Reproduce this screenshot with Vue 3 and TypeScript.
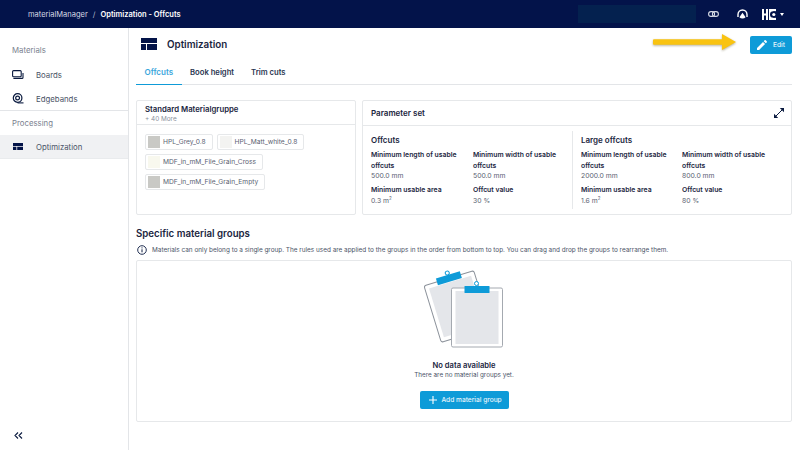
<script setup lang="ts">
const sets = [
  {
    title: "Offcuts",
    length: "500.0 mm",
    width: "500.0 mm",
    area: "0.3 m",
    value: "30 %"
  },
  {
    title: "Large offcuts",
    length: "2000.0 mm",
    width: "800.0 mm",
    area: "1.6 m",
    value: "80 %"
  }
];

const chipRows = [
  [
    { name: "HPL_Grey_0.8", color: "#c9c9c5" },
    { name: "HPL_Matt_white_0.8", color: "#f3f3f1" }
  ],
  [{ name: "MDF_in_mM_File_Grain_Cross", color: "#f8f8ee" }],
  [{ name: "MDF_in_mM_File_Grain_Empty", color: "#c9c9c5" }]
];
</script>

<template>
  <div class="app">
    <header class="topbar">
      <div class="crumbs">
        <span class="crumb-app">materialManager</span>
        <span class="crumb-sep">/</span>
        <span class="crumb-page">Optimization - Offcuts</span>
      </div>
      <div class="search-slot"></div>
      <svg class="top-icon link-icon" viewBox="0 0 11 6" width="11" height="6">
        <rect x="0.6" y="0.6" width="6" height="4.800" rx="2.400" />
        <rect x="4.400" y="0.6" width="6" height="4.800" rx="2.400" />
      </svg>
      <svg class="top-icon help-icon" viewBox="0 0 11 10" width="11" height="10">
        <path class="thick" d="M1 8V5.500a4.500 4.500 0 0 1 9 0V8" />
        <path class="solid" d="M2.400 8.300 5.500 3.800l3.100 4.500a4.400 4.400 0 0 1-6.200 0z" />
      </svg>
      <svg class="logo" viewBox="0 0 14 11" width="14" height="11">
        <path fill="#fff" d="M0 0h2v4.500h2V0h2v11H4V6.500H2V11H0z" />
        <rect x="7" y="0" width="7" height="11" fill="#fff" />
        <circle cx="11.300" cy="5.500" r="3.300" fill="#03134a" />
        <rect x="11.300" y="2.200" width="2.700" height="6.600" fill="#03134a" />
        <circle fill="#fff" cx="11.800" cy="5.500" r="1.600" />
      </svg>
      <span class="caret"></span>
    </header>

    <div class="body">
      <aside class="sidebar">
        <div class="nav">
          <div class="nav-title first">Materials</div>
          <div class="nav-item">
            <svg class="nav-icon" viewBox="0 0 12 10" width="12" height="10">
              <rect x="0.6" y="0.6" width="8.600" height="6.200" rx="1" fill="none" stroke="#0a1a3f" stroke-width="1.100" />
              <path d="M11 3v4.400a1 1 0 0 1-1 1H1.400" fill="none" stroke="#0a1a3f" stroke-width="1.100" />
            </svg>
            <span>Boards</span>
          </div>
          <div class="nav-item">
            <svg class="nav-icon" viewBox="0 0 12 12" width="12" height="12">
              <circle cx="5.600" cy="5" r="4.300" fill="none" stroke="#0a1a3f" stroke-width="1.200" />
              <circle cx="5.600" cy="5" r="1.900" fill="none" stroke="#0a1a3f" stroke-width="1.200" />
              <path d="M5.600 9.900H11.500" stroke="#0a1a3f" stroke-width="1.100" />
            </svg>
            <span>Edgebands</span>
          </div>
          <div class="nav-rule"></div>
          <div class="nav-title">Processing</div>
          <div class="nav-item active">
            <svg class="nav-icon" viewBox="0 0 10 7" width="10" height="7">
              <path fill="#031348" d="M0 0h10v3H0zM0 3.800h3.400V7H0zM4.200 3.800H10V7H4.200z" />
            </svg>
            <span>Optimization</span>
          </div>
        </div>
        <svg class="collapse" viewBox="0 0 9 7" width="9" height="7">
          <path d="M4 .5 1 3.500l3 3M8 .5l-3 3 3 3" />
        </svg>
      </aside>

      <main class="content">
        <div class="page-head">
          <svg class="page-icon" viewBox="0 0 16 12" width="16" height="12">
            <path fill="#031348" d="M0 0h16v5H0zM0 6h5v6H0zM6 6h10v6H6z" />
          </svg>
          <h1>Optimization</h1>
          <button class="btn edit">
            <svg viewBox="0 0 10 10" width="10" height="10">
              <path fill="#fff" d="M0 10V7.900L6 1.900 8.100 4 2.100 10zM6.700 1.200 7.600.3a.8.8 0 0 1 1.100 0l1 1a.8.8 0 0 1 0 1.100l-.9.9z" />
            </svg>
            Edit
          </button>
        </div>

        <nav class="tabs">
          <span class="tab current">Offcuts</span>
          <span class="tab">Book height</span>
          <span class="tab">Trim cuts</span>
        </nav>

        <div class="cards">
          <section class="card group">
            <div class="group-head">
              <div class="group-title">Standard Materialgruppe</div>
              <div class="group-more">+ 40 More</div>
            </div>
            <div class="chips">
              <div v-for="(row, i) in chipRows" :key="i" class="chip-row">
                <div v-for="chip in row" :key="chip.name" class="chip">
                  <i class="swatch" :style="{ background: chip.color }"></i>
                  {{ chip.name }}
                </div>
              </div>
            </div>
          </section>

          <section class="card params">
            <div class="params-head">
              <span>Parameter set</span>
              <svg viewBox="0 0 10 10" width="10" height="10">
                <path d="M1.500 8.500 8.500 1.500" stroke="#0a1a3f" stroke-width="1" />
                <path fill="#0a1a3f" d="M5.800 0H10v4.200zM0 5.800V10h4.200z" />
              </svg>
            </div>
            <div class="params-body">
              <div v-for="set in sets" :key="set.title" class="param-col">
                <h3>{{ set.title }}</h3>
                <div class="param-grid">
                  <div>
                    <b>Minimum length of usable offcuts</b>
                    <span>{{ set.length }}</span>
                  </div>
                  <div>
                    <b>Minimum width of usable offcuts</b>
                    <span>{{ set.width }}</span>
                  </div>
                  <div>
                    <b>Minimum usable area</b>
                    <span>{{ set.area }}<sup>2</sup></span>
                  </div>
                  <div>
                    <b>Offcut value</b>
                    <span>{{ set.value }}</span>
                  </div>
                </div>
              </div>
            </div>
          </section>
        </div>

        <h2>Specific material groups</h2>
        <div class="hint">
          <svg viewBox="0 0 10 10" width="10" height="10">
            <circle cx="5" cy="5" r="4.300" fill="none" stroke="#0a1a3f" stroke-width="0.900" />
            <path d="M5 4.300v3M5 2.400v1" stroke="#0a1a3f" stroke-width="1" />
          </svg>
          <span>Materials can only belong to a single group. The rules used are applied to the groups in the order from bottom to top. You can drag and drop the groups to rearrange them.</span>
        </div>

        <div class="card empty">
          <svg class="clipboards" viewBox="0 0 84 86" width="84" height="86">
            <g transform="rotate(-17 35.500 38.500)">
              <rect x="9.500" y="9" width="52" height="59" rx="2" fill="#fff" stroke="#8c929b" stroke-width="1" />
              <rect x="13.500" y="13" width="44" height="51" fill="#e4e6ea" />
              <rect x="23" y="5.500" width="25" height="7" fill="#0e9bd8" />
              <circle cx="35.500" cy="3.500" r="2" fill="#fff" stroke="#0e9bd8" stroke-width="1" />
            </g>
            <rect x="29.500" y="20" width="51" height="59" rx="1.500" fill="#fff" stroke="#a4a9b0" stroke-width="1" />
            <rect x="33.500" y="23" width="43" height="53" fill="#e4e6ea" />
            <rect x="42.500" y="18" width="25" height="7" rx="0.500" fill="#0e9bd8" />
            <circle cx="54.500" cy="15.500" r="2" fill="#fff" stroke="#0e9bd8" stroke-width="1" />
          </svg>
          <strong>No data available</strong>
          <p>There are no material groups yet.</p>
          <button class="btn add">
            <svg viewBox="0 0 8 8" width="8" height="8">
              <path d="M4 0v8M0 4h8" stroke="#fff" stroke-width="1.100" />
            </svg>
            Add material group
          </button>
        </div>
      </main>
    </div>

    <svg class="arrow" viewBox="0 0 84 16" width="84" height="16">
      <path d="M1 5.200h68V0L83 8 69 16v-5.200H1a1 1 0 0 1-1-1V6.200a1 1 0 0 1 1-1z" fill="#f9c311" />
    </svg>
  </div>
</template>

<style>
html,
body {
  margin: 0;
  background: #fff;
}
</style>

<style scoped>
.app {
  position: relative;
  width: 800px;
  height: 450px;
  overflow: hidden;
  display: flex;
  flex-direction: column;
  font-family: Inter, "Liberation Sans", sans-serif;
  color: #1a2540;
}
.topbar {
  height: 28px;
  flex: none;
  display: flex;
  align-items: center;
  background: #03134a;
  color: #fff;
  padding: 0 16px 0 28px;
  font-size: 7.500px;
}
.crumb-app {
  color: #d5d9e4;
}
.crumb-sep {
  margin: 0 5px;
  color: #b6bccd;
}
.crumb-page {
  font-weight: 600;
}
.search-slot {
  width: 118px;
  height: 18px;
  margin-left: auto;
  background: #04214f;
}
.top-icon {
  fill: none;
  stroke: #d8dce6;
  stroke-width: 1.100;
}
.top-icon .thick {
  stroke: #fff;
  stroke-width: 1.400;
}
.top-icon .solid {
  fill: #fff;
  stroke: none;
}
.link-icon {
  margin-left: 12px;
}
.help-icon {
  margin-left: 18px;
}
.logo {
  margin-left: 14px;
}
.caret {
  margin-left: 4px;
  border: 2.500px solid transparent;
  border-top: 3px solid #fff;
  border-bottom: 0;
}
.body {
  flex: 1;
  display: flex;
  min-height: 0;
}
.sidebar {
  width: 128px;
  flex: none;
  display: flex;
  flex-direction: column;
  justify-content: space-between;
  border-right: 1px solid #e3e5e8;
  font-size: 7.800px;
  color: #4b5468;
}
.nav {
  padding-top: 10px;
}
.nav-title {
  height: 24px;
  line-height: 24px;
  padding-left: 12px;
  color: #7b8290;
}
.nav-title.first {
  height: 25px;
}
.nav-item {
  height: 24px;
  display: flex;
  align-items: center;
  padding-left: 12px;
}
.nav-icon {
  margin-right: 12px;
  width: 12px;
}
.nav-rule {
  height: 1px;
  margin-top: -1px;
  background: #e3e5e8;
}
.nav-item.active {
  background: #f0f1f3;
  height: 23px;
  border-bottom: 1px solid #e9ebed;
}
.collapse {
  margin: 0 0 11px 14px;
  fill: none;
  stroke: #0a1a3f;
  stroke-width: 1.100;
}
.content {
  flex: 1;
  min-width: 0;
  padding: 0 8px 0 7px;
  display: flex;
  flex-direction: column;
}
.page-head {
  height: 32px;
  display: flex;
  align-items: center;
  padding-left: 5px;
}
.page-icon {
  margin-right: 10px;
}
h1 {
  margin: 0;
  font-size: 9.800px;
  font-weight: 600;
  color: #1a2540;
}
.btn {
  display: flex;
  align-items: center;
  border: 0;
  border-radius: 2px;
  background: #0e9bd8;
  color: #e8f6fc;
  font: 500 6.600px Inter, "Liberation Sans", sans-serif;
}
.edit {
  margin-left: auto;
  margin-top: 1px;
  width: 42px;
  height: 18px;
  padding: 0 0 0 7px;
  gap: 6px;
}
.tabs {
  height: 20px;
  margin-top: 4px;
  display: flex;
  border-bottom: 1px solid #e3e5e8;
  font-size: 7.650px;
  font-weight: 600;
  color: #2a3550;
}
.tab {
  padding: 0 8.500px;
  line-height: 17px;
}
.tab.current {
  color: #3aa6dc;
  font-size: 8px;
  border-bottom: 1px solid #0e9bd8;
  height: 20px;
}
.cards {
  margin-top: 15px;
  height: 115px;
  display: flex;
  gap: 6px;
  flex: none;
}
.card {
  box-sizing: border-box;
  border: 1px solid #e6e8ea;
  border-radius: 2px;
  background: #fff;
}
.group {
  width: 220px;
  flex: none;
}
.group-head {
  height: 24px;
  box-sizing: border-box;
  padding: 2px 8px 0;
  border-bottom: 1px solid #e6e8ea;
}
.group-title {
  font-size: 7.750px;
  font-weight: 600;
  line-height: 12px;
}
.group-more {
  font-size: 6.400px;
  line-height: 9px;
  color: #8a909c;
}
.chips {
  padding: 9px 8px 0;
  display: flex;
  flex-direction: column;
  gap: 4px;
}
.chip-row {
  display: flex;
  gap: 4px;
}
.chip {
  height: 16px;
  box-sizing: border-box;
  display: flex;
  align-items: center;
  gap: 3px;
  padding: 0 6px 0 2px;
  border: 1px solid #e6e8ea;
  border-radius: 2px;
  font-size: 6.650px;
  color: #5a6272;
}
.swatch {
  width: 12px;
  height: 12px;
}
.params {
  flex: 1;
  min-width: 0;
}
.params-head {
  height: 25px;
  box-sizing: border-box;
  display: flex;
  align-items: center;
  justify-content: space-between;
  padding: 0 7px 0 8px;
  border-bottom: 1px solid #e6e8ea;
  font-size: 8px;
  font-weight: 600;
}
.params-body {
  display: flex;
  padding-top: 5px;
}
.param-col {
  width: 209px;
  box-sizing: border-box;
  padding-left: 8px;
  height: 78px;
}
.param-col + .param-col {
  width: auto;
  flex: 1;
  border-left: 1px solid #e6e8ea;
  padding-left: 8px;
}
h3 {
  margin: 1px 0 0;
  font-size: 8px;
  line-height: 16px;
  font-weight: 600;
}
.param-grid {
  display: grid;
  grid-template-columns: 102px 100px;
  row-gap: 3.500px;
  margin-top: 2px;
}
.param-col + .param-col .param-grid {
  grid-template-columns: 101px 100px;
}
.param-grid b {
  display: block;
  font-size: 6.850px;
  font-weight: 600;
  line-height: 10.500px;
  max-width: 92px;
}
.param-grid span {
  display: block;
  font-size: 6.800px;
  line-height: 10.500px;
  color: #5a6272;
}
.param-grid sup {
  font-size: 4.500px;
  line-height: 0;
}
h2 {
  margin: 12px 0 0;
  font-size: 9.700px;
  font-weight: 600;
  line-height: 14px;
}
.hint {
  margin-top: 3px;
  height: 12px;
  display: flex;
  align-items: center;
  gap: 5px;
  padding-left: 1px;
  font-size: 6.410px;
  color: #4b5468;
  white-space: nowrap;
}
.empty {
  margin-top: 4px;
  height: 162px;
  display: flex;
  flex-direction: column;
  align-items: center;
  flex: none;
}
.clipboards {
  margin-top: 7px;
  margin-left: -1px;
}
.empty strong {
  margin-top: 6px;
  font-size: 7.600px;
  font-weight: 600;
  line-height: 11px;
}
.empty p {
  margin: 0;
  font-size: 6.350px;
  line-height: 9px;
  color: #4b5468;
}
.add {
  margin-top: 11px;
  width: 89px;
  height: 18px;
  padding: 0 0 0 9px;
  gap: 5px;
}
.arrow {
  position: absolute;
  left: 653px;
  top: 34px;
  filter: drop-shadow(0 1px 1px rgba(90, 80, 40, 0.45));
}
</style>
